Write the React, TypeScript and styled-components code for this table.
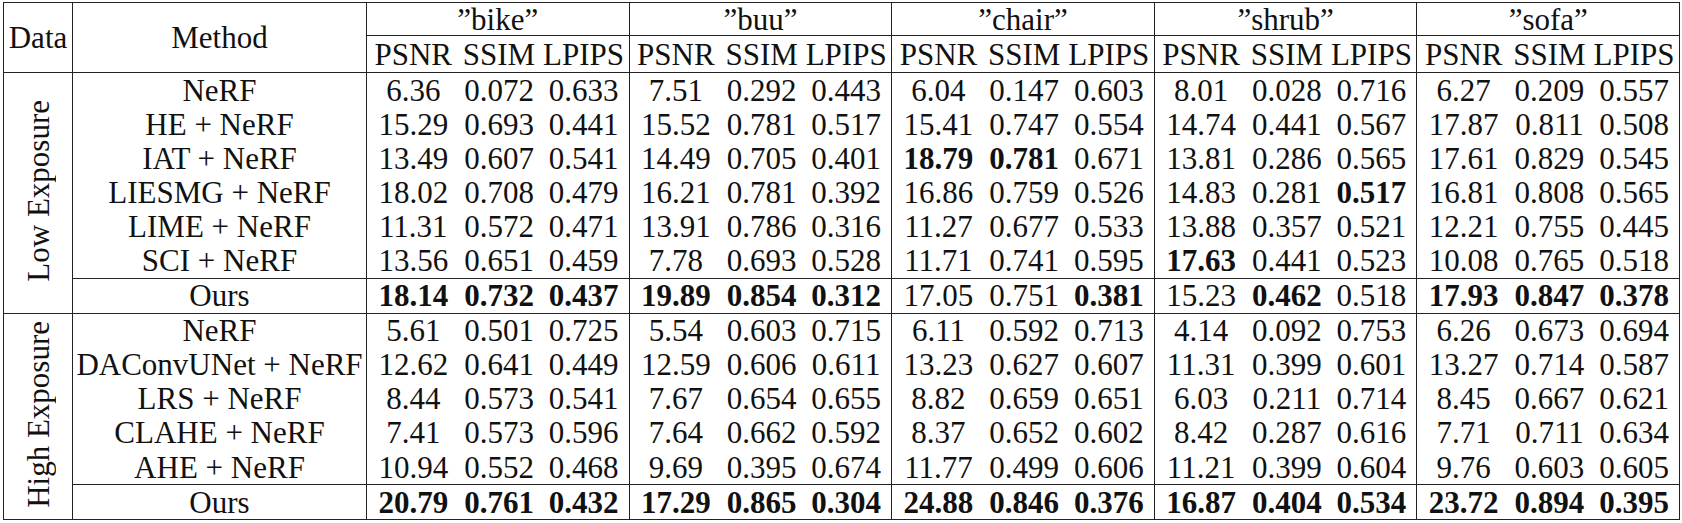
import React from 'react';
import styled, { createGlobalStyle } from 'styled-components';

const GlobalStyle = createGlobalStyle`
  html, body {
    margin: 0;
    padding: 0;
    background: #ffffff;
  }
  body {
    font-family: "Liberation Serif", "Times New Roman", serif;
    color: #111111;
  }
`;

const Page = styled.div`
  padding: 2px 0 0 3px;
`;

const Table = styled.table`
  width: 1677px;
  table-layout: fixed;
  border-collapse: collapse;
  border: 1px solid #222222;
  font-size: 31px;
  line-height: 1;
`;

const Col = styled.col<{ $w: number }>`
  width: ${(p) => p.$w}px;
`;

const HeadCell = styled.th<{ $groupStart?: boolean; $rule?: boolean; $h?: number }>`
  font-weight: normal;
  text-align: center;
  vertical-align: middle;
  padding: 0;
  height: ${(p) => p.$h ?? 34}px;
  white-space: nowrap;
  border-left: ${(p) => (p.$groupStart ? '1px solid #222222' : 'none')};
  border-bottom: ${(p) => (p.$rule ? '1px solid #222222' : 'none')};
`;

const LabelCell = styled.td`
  text-align: center;
  vertical-align: middle;
  padding: 0;
  border-left: 1px solid #222222;
  border-top: 1px solid #222222;
`;

const VerticalLabel = styled.span`
  display: inline-block;
  writing-mode: vertical-rl;
  transform: rotate(180deg);
  white-space: nowrap;
`;

const MethodCell = styled.td<{ $rule?: boolean }>`
  text-align: center;
  vertical-align: middle;
  padding: 0;
  height: 34.1px;
  white-space: nowrap;
  border-left: 1px solid #222222;
  border-top: ${(p) => (p.$rule ? '1px solid #222222' : 'none')};
`;

const ValueCell = styled.td<{ $bold?: boolean; $groupStart?: boolean; $rule?: boolean }>`
  text-align: center;
  vertical-align: middle;
  padding: 0;
  white-space: nowrap;
  font-weight: ${(p) => (p.$bold ? 'bold' : 'normal')};
  border-left: ${(p) => (p.$groupStart ? '1px solid #222222' : 'none')};
  border-top: ${(p) => (p.$rule ? '1px solid #222222' : 'none')};
`;

const scenes = ['bike', 'buu', 'chair', 'shrub', 'sofa'];
const metrics = ['PSNR', 'SSIM', 'LPIPS'];
const metricWidths = [93, 79, 90.6];

type Row = { method: string; values: string[]; bold?: number[]; allBold?: boolean };

const lowRows: Row[] = [
  { method: 'NeRF', values: ['6.36', '0.072', '0.633', '7.51', '0.292', '0.443', '6.04', '0.147', '0.603', '8.01', '0.028', '0.716', '6.27', '0.209', '0.557'] },
  { method: 'HE + NeRF', values: ['15.29', '0.693', '0.441', '15.52', '0.781', '0.517', '15.41', '0.747', '0.554', '14.74', '0.441', '0.567', '17.87', '0.811', '0.508'] },
  { method: 'IAT + NeRF', values: ['13.49', '0.607', '0.541', '14.49', '0.705', '0.401', '18.79', '0.781', '0.671', '13.81', '0.286', '0.565', '17.61', '0.829', '0.545'], bold: [6, 7] },
  { method: 'LIESMG + NeRF', values: ['18.02', '0.708', '0.479', '16.21', '0.781', '0.392', '16.86', '0.759', '0.526', '14.83', '0.281', '0.517', '16.81', '0.808', '0.565'], bold: [11] },
  { method: 'LIME + NeRF', values: ['11.31', '0.572', '0.471', '13.91', '0.786', '0.316', '11.27', '0.677', '0.533', '13.88', '0.357', '0.521', '12.21', '0.755', '0.445'] },
  { method: 'SCI + NeRF', values: ['13.56', '0.651', '0.459', '7.78', '0.693', '0.528', '11.71', '0.741', '0.595', '17.63', '0.441', '0.523', '10.08', '0.765', '0.518'], bold: [9] },
  { method: 'Ours', values: ['18.14', '0.732', '0.437', '19.89', '0.854', '0.312', '17.05', '0.751', '0.381', '15.23', '0.462', '0.518', '17.93', '0.847', '0.378'], bold: [0, 1, 2, 3, 4, 5, 8, 10, 12, 13, 14] },
];

const highRows: Row[] = [
  { method: 'NeRF', values: ['5.61', '0.501', '0.725', '5.54', '0.603', '0.715', '6.11', '0.592', '0.713', '4.14', '0.092', '0.753', '6.26', '0.673', '0.694'] },
  { method: 'DAConvUNet + NeRF', values: ['12.62', '0.641', '0.449', '12.59', '0.606', '0.611', '13.23', '0.627', '0.607', '11.31', '0.399', '0.601', '13.27', '0.714', '0.587'] },
  { method: 'LRS + NeRF', values: ['8.44', '0.573', '0.541', '7.67', '0.654', '0.655', '8.82', '0.659', '0.651', '6.03', '0.211', '0.714', '8.45', '0.667', '0.621'] },
  { method: 'CLAHE + NeRF', values: ['7.41', '0.573', '0.596', '7.64', '0.662', '0.592', '8.37', '0.652', '0.602', '8.42', '0.287', '0.616', '7.71', '0.711', '0.634'] },
  { method: 'AHE + NeRF', values: ['10.94', '0.552', '0.468', '9.69', '0.395', '0.674', '11.77', '0.499', '0.606', '11.21', '0.399', '0.604', '9.76', '0.603', '0.605'] },
  { method: 'Ours', values: ['20.79', '0.761', '0.432', '17.29', '0.865', '0.304', '24.88', '0.846', '0.376', '16.87', '0.404', '0.534', '23.72', '0.894', '0.395'], allBold: true },
];

const Section: React.FC<{ label: string; rows: Row[] }> = ({ label, rows }) => (
  <>
    {rows.map((row, i) => {
      const isOurs = i === rows.length - 1;
      return (
        <tr key={row.method + i}>
          {i === 0 && (
            <LabelCell rowSpan={rows.length}>
              <VerticalLabel>{label}</VerticalLabel>
            </LabelCell>
          )}
          <MethodCell $rule={isOurs || i === 0}>{row.method}</MethodCell>
          {row.values.map((v, j) => (
            <ValueCell
              key={j}
              $groupStart={j % 3 === 0}
              $rule={isOurs || i === 0}
              $bold={row.allBold || (row.bold ?? []).includes(j)}
            >
              {v}
            </ValueCell>
          ))}
        </tr>
      );
    })}
  </>
);

const App: React.FC = () => {
  return (
    <Page>
      <GlobalStyle />
      <Table>
        <colgroup>
          <Col $w={69} />
          <Col $w={294} />
          {scenes.map((s) =>
            metricWidths.map((w, k) => <Col key={s + k} $w={w} />)
          )}
        </colgroup>
        <thead>
          <tr>
            <HeadCell rowSpan={2} $rule>Data</HeadCell>
            <HeadCell rowSpan={2} $groupStart $rule>Method</HeadCell>
            {scenes.map((s) => (
              <HeadCell key={s} colSpan={3} $groupStart $rule $h={32}>
                ”{s}”
              </HeadCell>
            ))}
          </tr>
          <tr>
            {scenes.map((s) =>
              metrics.map((m, k) => (
                <HeadCell key={s + m} $groupStart={k === 0} $rule $h={36}>
                  {m}
                </HeadCell>
              ))
            )}
          </tr>
        </thead>
        <tbody>
          <Section label="Low Exposure" rows={lowRows} />
          <Section label="High Exposure" rows={highRows} />
        </tbody>
      </Table>
    </Page>
  );
};

export default App;
